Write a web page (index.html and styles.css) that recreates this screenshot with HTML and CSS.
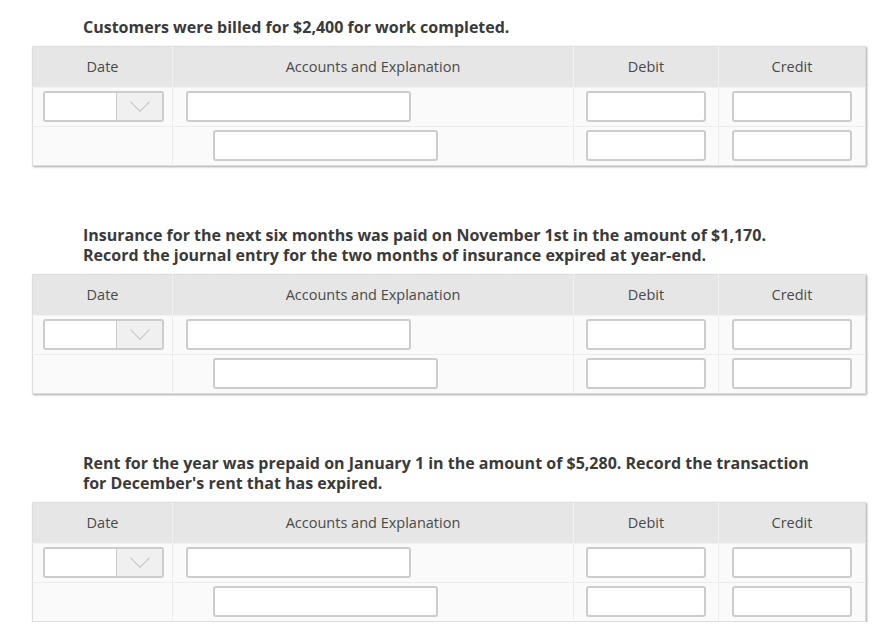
FILE: index.html
```html
<!DOCTYPE html>
<html lang="en">
<head>
    <meta charset="UTF-8">
    <title>Journal entries</title>
    <link rel="stylesheet" href="styles.css">
</head>
<body>
<div class="page">
    <div class="entry">
        <p class="question">Customers were billed for $2,400 for work completed.</p>
        <table class="journal">
            <tr>
                <th class="c-date">Date</th>
                <th class="c-acct">Accounts and Explanation</th>
                <th class="c-debit">Debit</th>
                <th class="c-credit">Credit</th>
            </tr>
            <tr>
                <td><div class="select"><span class="val"></span><span class="arrow"></span></div></td>
                <td><input class="acct" type="text"></td>
                <td><input class="amt" type="text"></td>
                <td><input class="amt credit" type="text"></td>
            </tr>
            <tr>
                <td></td>
                <td><input class="acct indent" type="text"></td>
                <td><input class="amt" type="text"></td>
                <td><input class="amt credit" type="text"></td>
            </tr>
        </table>
    </div>

    <div class="entry">
        <p class="question">Insurance for the next six months was paid on November 1st in the amount of $1,170.<br>Record the journal entry for the two months of insurance expired at year-end.</p>
        <table class="journal">
            <tr>
                <th class="c-date">Date</th>
                <th class="c-acct">Accounts and Explanation</th>
                <th class="c-debit">Debit</th>
                <th class="c-credit">Credit</th>
            </tr>
            <tr>
                <td><div class="select"><span class="val"></span><span class="arrow"></span></div></td>
                <td><input class="acct" type="text"></td>
                <td><input class="amt" type="text"></td>
                <td><input class="amt credit" type="text"></td>
            </tr>
            <tr>
                <td></td>
                <td><input class="acct indent" type="text"></td>
                <td><input class="amt" type="text"></td>
                <td><input class="amt credit" type="text"></td>
            </tr>
        </table>
    </div>

    <div class="entry">
        <p class="question">Rent for the year was prepaid on January 1 in the amount of $5,280. Record the transaction<br>for December's rent that has expired.</p>
        <table class="journal">
            <tr>
                <th class="c-date">Date</th>
                <th class="c-acct">Accounts and Explanation</th>
                <th class="c-debit">Debit</th>
                <th class="c-credit">Credit</th>
            </tr>
            <tr>
                <td><div class="select"><span class="val"></span><span class="arrow"></span></div></td>
                <td><input class="acct" type="text"></td>
                <td><input class="amt" type="text"></td>
                <td><input class="amt credit" type="text"></td>
            </tr>
            <tr>
                <td></td>
                <td><input class="acct indent" type="text"></td>
                <td><input class="amt" type="text"></td>
                <td><input class="amt credit" type="text"></td>
            </tr>
        </table>
    </div>
</div>
</body>
</html>
```

FILE: styles.css
```css
* {
    margin: 0;
    padding: 0;
    box-sizing: border-box;
}

body {
    background: #fff;
    font-family: "Open Sans", "Liberation Sans", sans-serif;
    color: #333;
}

.page {
    padding: 17px 0 0 32px;
}

.entry {
    margin-bottom: 59px;
}

.entry:last-child {
    margin-bottom: 0;
}

.question {
    padding-left: 51px;
    margin-bottom: 9px;
    font-size: 16px;
    font-weight: bold;
    line-height: 20px;
    color: #3a3a3a;
}

.journal {
    width: 833px;
    border-collapse: collapse;
    table-layout: fixed;
    border: 1px solid #ddd;
    box-shadow: 1px 1px 2px rgba(0, 0, 0, 0.35);
    background: #fafafa;
}

.journal th {
    height: 41px;
    padding-bottom: 2px;
    background: #e6e6e6;
    font-size: 14.5px;
    font-weight: normal;
    color: #4a4a4a;
    text-align: center;
    border-right: 1px solid #f0f0f0;
    border-bottom: 1px solid #f2f2f2;
}

.journal td {
    height: 39px;
    padding: 0 0 1px 0;
    vertical-align: middle;
    border-right: 1px solid #ececec;
    border-top: 1px solid #ececec;
}

.journal th:last-child, .journal td:last-child {
    border-right: none;
}

.c-date { width: 140px; }
.c-acct { width: 401px; }
.c-debit { width: 145px; }
.c-credit { width: 147px; }

input {
    display: block;
    height: 31px;
    border: 2px solid #ccc;
    border-radius: 3px;
    background: #fff;
    outline: none;
}

.acct {
    width: 225px;
    margin-left: 13px;
}

.acct.indent {
    margin-left: 40px;
}

.amt {
    width: 120px;
    margin-left: 12px;
}

.amt.credit {
    margin-left: 13px;
}

.select {
    display: flex;
    width: 121px;
    height: 31px;
    margin-left: 10px;
    border: 2px solid #ccc;
    border-radius: 3px;
    overflow: hidden;
}

.select .val {
    flex: 1;
    background: #fff;
}

.select .arrow {
    position: relative;
    width: 46px;
    background: #f0f0f0;
    border-left: 1px solid #ccc;
}

/* chevron */
.select .arrow::after {
    content: "";
    position: absolute;
    left: 16px;
    top: 2px;
    width: 13px;
    height: 13px;
    border-right: 1.5px solid #c4c4c4;
    border-bottom: 1.5px solid #c4c4c4;
    transform: rotate(45deg);
}
```
